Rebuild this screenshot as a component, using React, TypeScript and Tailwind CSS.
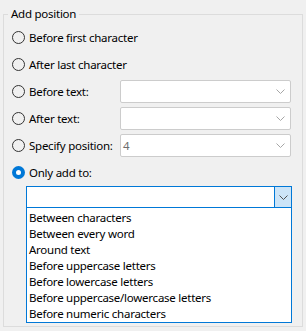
import { ReactNode } from 'react'

const font = { fontFamily: '"Noto Sans", "Liberation Sans", sans-serif' }

function Chevron({ dark }: { dark?: boolean }) {
    return (
        <svg width="9" height="5" viewBox="0 0 9 5" className="block">
            <path
                d="M0.5 0.5 L4.5 4.5 L8.5 0.5"
                fill="none"
                stroke={dark ? '#505050' : '#a6a6a6'}
                strokeWidth="1"
            />
        </svg>
    )
}

function Radio({ checked }: { checked?: boolean }) {
    if (checked) {
        return (
            <span className="flex h-[13px] w-[13px] shrink-0 items-center justify-center rounded-full bg-[#0078d7]">
                <span className="h-[5px] w-[5px] rounded-full bg-white"></span>
            </span>
        )
    }
    return <span className="h-[13px] w-[13px] shrink-0 rounded-full border border-[#333333]"></span>
}

// Disabled-looking combo next to a radio
function Combo({ value }: { value?: string }) {
    return (
        <div className="flex h-[23px] w-[171px] items-center justify-between rounded-[2px] border border-[#cccccc] bg-white pl-[2px] pr-[5px]">
            <span className="text-[#6d6d6d]">{value}</span>
            <Chevron />
        </div>
    )
}

function Row({ label, checked, children }: { label: string; checked?: boolean; children?: ReactNode }) {
    return (
        <div className="flex h-[27px] items-center pl-[8px]">
            <Radio checked={checked} />
            <span className="ml-[4px] w-[91px] shrink-0 whitespace-nowrap text-black">{label}</span>
            {children}
        </div>
    )
}

const options = [
    'Between characters',
    'Between every word',
    'Around text',
    'Before uppercase letters',
    'Before lowercase letters',
    'Before uppercase/lowercase letters',
    'Before numeric characters',
]

export default function App() {
    return (
        <div
            className="h-[331px] w-[306px] bg-[#f0f0f0] px-[3px] pt-[6px] text-[11.5px] leading-[16px] tracking-[-0.25px]"
            style={font}
        >
            <fieldset className="h-[321px] w-[300px] border border-[#dcdcdc]">
                <legend className="ml-[4px] px-[3px] text-black">Add position</legend>
                <div className="pt-[2px]">
                    <Row label="Before first character" />
                    <Row label="After last character" />
                    <Row label="Before text:">
                        <Combo />
                    </Row>
                    <Row label="After text:">
                        <Combo />
                    </Row>
                    <Row label="Specify position:">
                        <Combo value="4" />
                    </Row>
                    <Row label="Only add to:" checked />

                    {/* open dropdown */}
                    <div className="ml-[22px] w-[266px]">
                        <div className="flex h-[22px] border border-[#0078d7] bg-white">
                            <div className="flex-1"></div>
                            <div className="flex w-[17px] items-center justify-center border-l border-[#0078d7] bg-[#cce4f7]">
                                <Chevron dark />
                            </div>
                        </div>
                        <div className="border border-t-0 border-[#0078d7] bg-white py-[1px]">
                            {options.map((o) => (
                                <div key={o} className="h-[16px] whitespace-nowrap pl-[2px] pt-[1px] text-black">
                                    {o}
                                </div>
                            ))}
                        </div>
                    </div>
                </div>
            </fieldset>
        </div>
    )
}
